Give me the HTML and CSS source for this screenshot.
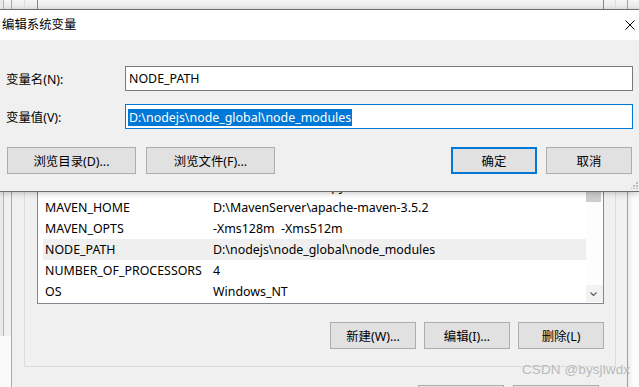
FILE: index.html
```html
<!DOCTYPE html>
<html lang="zh-CN">
<head>
    <meta charset="UTF-8">
    <title>编辑系统变量</title>
    <link rel="stylesheet" href="styles.css">
</head>
<body>
<div class="desk">

    <!-- the environment variables window behind the dialog -->
    <div class="envwin">
        <div class="side"><div class="side-pane"></div></div>

        <div class="frame">
            <div class="group">
                <div class="list">
                    <div class="list-body">
                        <div class="row"><span class="col-name">LIB</span><span>D:\Anaconda3\envs\py37\Lib</span></div>
                        <div class="row"><span class="col-name">MAVEN_HOME</span><span>D:\MavenServer\apache-maven-3.5.2</span></div>
                        <div class="row"><span class="col-name">MAVEN_OPTS</span><span>-Xms128m &nbsp;-Xms512m</span></div>
                        <div class="row current"><span class="col-name">NODE_PATH</span><span>D:\nodejs\node_global\node_modules</span></div>
                        <div class="row"><span class="col-name">NUMBER_OF_PROCESSORS</span><span>4</span></div>
                        <div class="row"><span class="col-name">OS</span><span>Windows_NT</span></div>
                    </div>
                    <div class="scrollbar">
                        <div class="sb-button"></div>
                        <div class="sb-thumb"></div>
                        <div class="sb-track"></div>
                        <div class="sb-button">
                            <svg width="7" height="4" viewBox="0 0 7 4"><path d="M0.5 0.5 L3.5 3.5 L6.5 0.5" fill="none" stroke="#606060" stroke-width="1.2"/></svg>
                        </div>
                    </div>
                </div>
                <div class="list-actions">
                    <button class="btn small">新建(W)...</button>
                    <button class="btn small">编辑(I)...</button>
                    <button class="btn small">删除(L)</button>
                </div>
            </div>
            <div class="win-actions">
                <button class="btn small">确定</button>
                <button class="btn small">取消</button>
            </div>
        </div>

        <div class="outside"></div>
    </div>

    <!-- edit dialog on top -->
    <div class="dialog">
        <div class="titlebar">
            <span class="title">编辑系统变量</span>
            <svg class="close" width="10" height="10" viewBox="0 0 10 10">
                <path d="M0.5 0.5 L9.5 9.5 M9.5 0.5 L0.5 9.5" stroke="#000" stroke-width="1"/>
            </svg>
        </div>
        <div class="dialog-body">
            <div class="field">
                <label>变量名(N):</label>
                <div class="input">NODE_PATH</div>
            </div>
            <div class="field">
                <label>变量值(V):</label>
                <div class="input focus"><span class="sel">D:\nodejs\node_global\node_modules</span></div>
            </div>
            <div class="dialog-actions">
                <div class="browse">
                    <button class="btn wide">浏览目录(D)...</button>
                    <button class="btn wide">浏览文件(F)...</button>
                </div>
                <div class="confirm">
                    <button class="btn small default">确定</button>
                    <button class="btn small">取消</button>
                </div>
            </div>
        </div>
        <svg class="grip" width="7" height="7" viewBox="0 0 7 7">
            <rect x="5" y="0" width="2" height="2" fill="#bdbdbd"/>
            <rect x="2" y="3" width="2" height="2" fill="#bdbdbd"/>
            <rect x="5" y="3" width="2" height="2" fill="#bdbdbd"/>
            <rect x="-1" y="6" width="2" height="2" fill="#bdbdbd"/>
            <rect x="2" y="6" width="2" height="2" fill="#bdbdbd"/>
            <rect x="5" y="6" width="2" height="2" fill="#bdbdbd"/>
        </svg>
    </div>

    <div class="watermark">CSDN @bysjlwdx</div>
</div>
</body>
</html>
```

FILE: styles.css
```css
/* Windows 10 style: edit dialog over the environment variables window */
:root {
    --strip: linear-gradient(#f6f6f6, #e3e3e3) 0 0 / 100% 9px no-repeat;
}
html, body {
    margin: 0;
    padding: 0;
}
body {
    font-family: 'Noto Sans', 'Noto Sans CJK SC', sans-serif;
    font-size: 12.4px;
    color: #000;
    background: #fff;
}
.desk {
    position: relative;
    width: 639px;
    height: 387px;
    overflow: hidden;
}

/* ---------- buttons ---------- */
.btn {
    font: inherit;
    color: #000;
    height: 27px;
    padding: 0;
    background: #e1e1e1;
    border: 1px solid #adadad;
    box-sizing: border-box;
    flex: none;
}
.btn.small { width: 86px; }
.btn.wide { width: 129px; }
.btn.default {
    border: 2px solid #0078d7;
}

/* ---------- background window ---------- */
.envwin {
    display: flex;
    height: 100%;
}
.side {
    width: 11px;
    flex: none;
    display: flex;
    flex-direction: column;
    background: #fafafa;
}
.side-pane {
    height: 336px;
    background: var(--strip), #f0f0f0;
    border-left: 3px solid #e9e9e9;
    box-shadow: inset 1px 0 0 #b4b4b4;
}
.frame {
    flex: none;
    width: 617px;
    box-sizing: border-box;
    border-left: 1px solid #a9a9a9;
    border-right: 1px solid #a0a0a0;
    padding: 0 11px 0 12px;
    background: var(--strip), #f0f0f0;
}
.outside {
    flex: 1;
    background: var(--strip), linear-gradient(90deg, #ececec, #fbfbfb 5px);
}
.group {
    border: 1px solid #dcdcdc;
    border-top: 0;
    padding: 0 11px 17px 12px;
    background: var(--strip), #f0f0f0;
}
/* the top of the list runs under the dialog, so only its lower rows are drawn */
.list {
    display: flex;
    border: 1px solid #828790;
    border-top: 0;
    padding-bottom: 1px;
    background: var(--strip), #fff;
}
.list-body {
    flex: 1;
    padding-top: 176px;
}
.row {
    display: flex;
    height: 21px;
    line-height: 21px;
    margin-left: 5px;
    padding-left: 2px;
    white-space: nowrap;
    overflow: hidden;
}
.row.current {
    background: #efefef;
}
.col-name {
    width: 168px;
    flex: none;
}
.scrollbar {
    width: 17px;
    flex: none;
    display: flex;
    flex-direction: column;
    background: var(--strip), #fdfdfd;
}
.sb-button {
    height: 17px;
    flex: none;
    display: flex;
    align-items: center;
    justify-content: center;
    padding-right: 2px;
    background: #f2f2f2;
}
.sb-button:first-child {
    background: var(--strip), #f2f2f2;
}
.sb-thumb {
    height: 160px;
    margin: 25px 2px 0 0;
    background: #cdcdcd;
}
.sb-track {
    flex: 1;
}
.list-actions {
    display: flex;
    justify-content: flex-end;
    gap: 8px;
    margin-top: 18px;
}
.win-actions {
    display: flex;
    justify-content: flex-end;
    gap: 9px;
    margin: 18px 17px 0 0;
}

/* ---------- dialog ---------- */
.dialog {
    position: absolute;
    top: 9px;
    left: 0;
    width: 639px;
    border-top: 1px solid #707070;
    border-bottom: 1px solid #6e6e6e;
    background: #f0f0f0;
    box-shadow: 0 2px 5px rgba(0, 0, 0, 0.18);
}
.titlebar {
    height: 30px;
    display: flex;
    align-items: center;
    justify-content: space-between;
    padding: 0 4px 0 2px;
    background: #fff;
}
.title {
    line-height: 30px;
}
.close {
    display: block;
}
.dialog-body {
    padding: 26px 6px 17px 6px;
}
.field {
    display: grid;
    grid-template-columns: 119px 1fr;
    align-items: center;
}
.field + .field {
    margin-top: 13px;
}
.input {
    height: 25px;
    box-sizing: border-box;
    border: 1px solid #7a7a7a;
    background: #fff;
    padding: 0 3px;
    line-height: 23px;
    white-space: nowrap;
}
.input.focus {
    border-color: #0078d7;
    padding-left: 2px;
}
.sel {
    display: inline-block;
    line-height: 17px;
    padding: 0 1px;
    background: #0078d7;
    color: #fff;
    vertical-align: middle;
}
.dialog-actions {
    display: flex;
    justify-content: space-between;
    margin: 18px 1px 0 1px;
}
.browse, .confirm {
    display: flex;
}
.browse { gap: 10px; }
.confirm { gap: 9px; }
.grip {
    position: absolute;
    right: 1px;
    bottom: 2px;
}

.watermark {
    position: absolute;
    left: 522px;
    top: 362px;
    font-family: 'Liberation Sans', Arial, sans-serif;
    font-size: 13.5px;
    color: #bababa;
    letter-spacing: 0.1px;
}
```
